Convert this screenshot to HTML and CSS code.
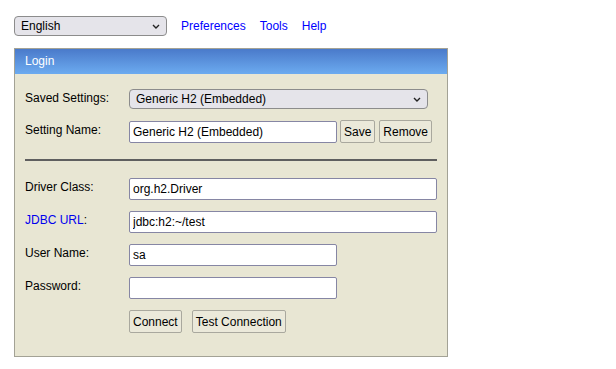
FILE: index.html
```html
<!DOCTYPE html>
<html lang="en">
<head>
<meta charset="utf-8">
<title>H2 Console</title>
<link rel="stylesheet" href="styles.css">
</head>
<body>
<div class="page">
  <div class="topbar">
    <div class="select-wrap lang">
      <select class="select"><option>English</option></select>
      <svg class="chev" width="8" height="5" viewBox="0 0 8 5"><path d="M1 1 L4 4 L7 1" fill="none" stroke="#222" stroke-width="1.4"/></svg>
    </div>
    <nav class="links">
      <a href="#">Preferences</a>
      <a href="#">Tools</a>
      <a href="#">Help</a>
    </nav>
  </div>

  <div class="panel">
    <div class="panel-head">Login</div>
    <div class="panel-body">
      <div class="row">
        <label class="lbl">Saved Settings:</label>
        <div class="field">
          <div class="select-wrap saved">
            <select class="select"><option>Generic H2 (Embedded)</option></select>
            <svg class="chev" width="8" height="5" viewBox="0 0 8 5"><path d="M1 1 L4 4 L7 1" fill="none" stroke="#222" stroke-width="1.4"/></svg>
          </div>
        </div>
      </div>
      <div class="row">
        <label class="lbl lbl-btnrow">Setting Name:</label>
        <div class="field inline">
          <input class="input short" type="text" value="Generic H2 (Embedded)">
          <button class="btn save">Save</button>
          <button class="btn">Remove</button>
        </div>
      </div>
      <hr class="sep">
      <div class="row">
        <label class="lbl">Driver Class:</label>
        <div class="field"><input class="input wide" type="text" value="org.h2.Driver"></div>
      </div>
      <div class="row">
        <label class="lbl"><a href="#">JDBC URL</a>:</label>
        <div class="field"><input class="input wide" type="text" value="jdbc:h2:~/test"></div>
      </div>
      <div class="row">
        <label class="lbl">User Name:</label>
        <div class="field"><input class="input short" type="text" value="sa"></div>
      </div>
      <div class="row">
        <label class="lbl">Password:</label>
        <div class="field"><input class="input short" type="password" value=""></div>
      </div>
      <div class="row">
        <span class="lbl"></span>
        <div class="field actions">
          <button class="btn">Connect</button>
          <button class="btn">Test Connection</button>
        </div>
      </div>
    </div>
  </div>
</div>
</body>
</html>
```

FILE: styles.css
```css
* { box-sizing: border-box; }

html, body {
  margin: 0;
  background: #ffffff;
}

body {
  font-family: "Liberation Sans", Arial, sans-serif;
  font-size: 12px;
  color: #000;
}

.page {
  padding: 16px 14px;
}

.topbar {
  display: flex;
  align-items: center;
  height: 20px;
  gap: 14px;
}

.links {
  display: flex;
  gap: 14px;
}

.links a,
.lbl a {
  color: #0000ee;
  text-decoration: none;
}

.links a {
  color: #0000ff;
  line-height: 20px;
}

.select-wrap {
  position: relative;
  height: 20px;
}

.select-wrap.lang { width: 153px; }
.select-wrap.saved { width: 299px; }

.select {
  -webkit-appearance: none;
  appearance: none;
  width: 100%;
  height: 20px;
  margin: 0;
  padding: 0 20px 0 6px;
  font: 12px "Liberation Sans", Arial, sans-serif;
  color: #000;
  background: #e5e4ea;
  border: 1px solid #8c8c8c;
  border-radius: 4px;
}

.chev {
  position: absolute;
  right: 7px;
  top: 8px;
  pointer-events: none;
}

.panel {
  margin-top: 12px;
  width: 434px;
  border: 1px solid #a3a295;
  background: #e8e6d3;
}

.panel-head {
  height: 25px;
  line-height: 25px;
  padding-left: 10px;
  color: #ffffff;
  background: linear-gradient(#4a7aca, #6cabf0);
}

.panel-body {
  display: flex;
  flex-direction: column;
  gap: 11px;
  padding: 15px 10px 23px 10px;
}

.row {
  display: flex;
  align-items: flex-start;
}

.lbl {
  flex: 0 0 104px;
  padding-top: 2px;
  line-height: 14px;
}

.lbl-btnrow { padding-top: 3px; }

.field {
  flex: 1 1 auto;
  display: flex;
  align-items: center;
}

.inline { gap: 3px; }
.inline .save { margin-right: 1px; }

.actions { gap: 10px; }

.input {
  height: 22px;
  margin: 0;
  padding: 0 3px;
  font: 12px "Liberation Sans", Arial, sans-serif;
  color: #000;
  background: #ffffff;
  border: 1px solid #8686a4;
  border-radius: 2px;
}

.lbl-btnrow + .field .input { margin-top: 1px; }

.input.short { width: 208px; }
.input.wide { width: 100%; }

.btn {
  height: 23px;
  margin: 0;
  padding: 0 3px;
  font: 12px "Liberation Sans", Arial, sans-serif;
  color: #000;
  background: #ebe9da;
  border: 1px solid #a9a89e;
  border-radius: 2px;
}

.sep {
  margin: 5px 0 6px 0;
  height: 2px;
  border: 0;
  background: #5f5f5f;
}
```
